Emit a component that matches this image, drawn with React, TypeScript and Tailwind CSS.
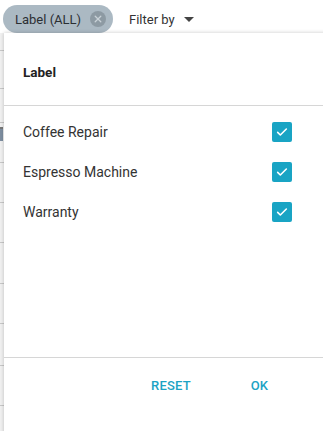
import React from "react";

const rows = ["Coffee Repair", "Espresso Machine", "Warranty"];
const lineYs = [50, 88, 122, 162, 202, 242, 283, 323, 365, 405];

function Check() {
  return (
    <div className="w-[20px] h-[20px] rounded-[2px] bg-[#19a4c4] flex items-center justify-center">
      <svg width="16" height="16" viewBox="0 0 24 24" fill="none">
        <path d="M5.5 12.5l4 4L18.5 7.5" stroke="white" strokeWidth="2.4" strokeLinecap="round" strokeLinejoin="round" />
      </svg>
    </div>
  );
}

export default function App() {
  return (
    <div
      className="relative w-[323px] h-[431px] overflow-hidden bg-white text-[#333]"
      style={{ fontFamily: "Roboto, 'Liberation Sans', sans-serif" }}
    >
      {/* top bar */}
      <div className="flex items-center h-[33px] pt-[5px]">
        <div className="ml-[3px] flex items-center h-[28px] w-[110px] rounded-full bg-[#abb9c3] pl-[12px] pr-[7px]">
          <span className="text-[13px] text-[#2b2f33] leading-none">Label (ALL)</span>
          <span className="ml-auto w-[16px] h-[16px] rounded-full bg-[#8d9aa3] flex items-center justify-center">
            <svg width="8" height="8" viewBox="0 0 10 10">
              <path d="M1.5 1.5l7 7M8.5 1.5l-7 7" stroke="#c9d2d8" strokeWidth="1.6" strokeLinecap="round" />
            </svg>
          </span>
        </div>
        <div className="ml-[16px] flex items-center gap-[9px]">
          <span className="text-[13px] text-[#333] leading-none">Filter by</span>
          <svg width="10" height="5" viewBox="0 0 10 5">
            <path d="M0 0h10L5 5z" fill="#444" />
          </svg>
        </div>
      </div>

      {/* underlying table strip */}
      <div className="absolute left-0 top-[33px] bottom-0 w-[4px] bg-[#f1f1f1]">
        {lineYs.map((y) => (
          <div key={y} className="absolute left-0 w-[4px] h-px bg-[#c8c8c8]" style={{ top: y - 33 }} />
        ))}
        <div className="absolute left-0 top-[94px] w-[3px] h-[6px] bg-[#777]" />
        <div className="absolute left-0 top-[96px] w-[3px] h-[12px] bg-[#7d8ea0]" />
      </div>

      {/* dropdown panel */}
      <div className="absolute left-[4px] top-[33px] right-[-10px] bottom-[-10px] bg-white shadow-[0_0_4px_rgba(0,0,0,0.22)] flex flex-col">
        <div className="h-[73px] border-b border-[#d6d6d6] pl-[19px] pt-[33px] shrink-0">
          <span className="text-[13.5px] font-bold text-[#222] leading-none block">Label</span>
        </div>
        <div className="h-[251px] pt-[6px] pl-[19px] pr-[41px] shrink-0">
          {rows.map((r) => (
            <div key={r} className="h-[40px] flex items-center justify-between">
              <span className="text-[14px] text-[#333]">{r}</span>
              <Check />
            </div>
          ))}
        </div>
        <div className="border-t border-[#d6d6d6] h-[56px] flex items-center justify-end pr-[65px] gap-[60px] shrink-0">
          <span className="text-[13px] font-medium text-[#1ca3c4] tracking-[0.2px]">RESET</span>
          <span className="text-[13px] font-medium text-[#1ca3c4]">OK</span>
        </div>
      </div>
    </div>
  );
}
